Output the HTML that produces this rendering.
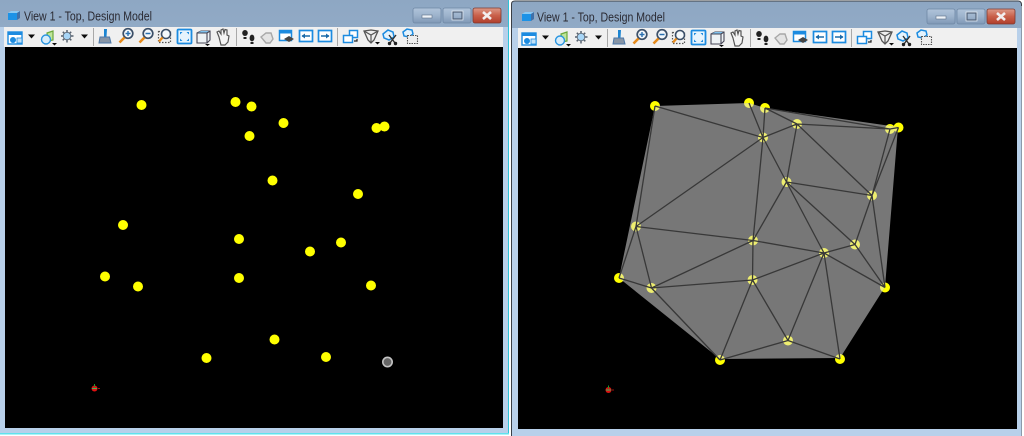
<!DOCTYPE html>
<html><head><meta charset="utf-8"><style>
html,body{margin:0;padding:0;background:#fff;width:1024px;height:436px;overflow:hidden}
svg{display:block}
text{font-family:"Liberation Sans",sans-serif;font-size:12.5px;fill:#2a2a33}
.d circle{r:5px}
</style></head><body>
<svg width="1024" height="436" viewBox="0 0 1024 436" xmlns="http://www.w3.org/2000/svg">
<defs>
<filter id="soft" x="-2%" y="-10%" width="104%" height="120%"><feGaussianBlur stdDeviation=".35"/></filter>
<linearGradient id="tg" x1="0" y1="0" x2="0" y2="1"><stop offset="0" stop-color="#8ea7c3"/><stop offset=".6" stop-color="#a9c2dc"/><stop offset="1" stop-color="#b9d1ea"/></linearGradient>
<linearGradient id="bb" x1="0" y1="0" x2="0" y2="1"><stop offset="0" stop-color="#b0c4da"/><stop offset=".5" stop-color="#9db3cc"/><stop offset="1" stop-color="#7f98b6"/></linearGradient>
<linearGradient id="cb" x1="0" y1="0" x2="0" y2="1"><stop offset="0" stop-color="#dd9a88"/><stop offset=".5" stop-color="#c9604a"/><stop offset="1" stop-color="#b03e2c"/></linearGradient>
<clipPath id="hull"><polygon points="655,106 749,103 765,108 898,127 885,287 840,358 720,359 619,278"/></clipPath>
<g id="chrome">
  <rect x="4" y="27" width="499" height="20" fill="#f0f0f0"/>
  <rect x="413" y="8" width="28" height="15" rx="2" fill="url(#bb)" stroke="#6f88a5" stroke-width=".8"/>
  <rect x="422" y="15" width="10" height="3" fill="#eef3f8" stroke="#5c6f86" stroke-width=".6"/>
  <rect x="443" y="8" width="28" height="15" rx="2" fill="url(#bb)" stroke="#6f88a5" stroke-width=".8"/>
  <rect x="453" y="12" width="9" height="7" fill="none" stroke="#4f6077" stroke-width="1.200"/><rect x="452" y="11" width="11" height="9" fill="none" stroke="#e8eef5" stroke-width=".7"/>
  <rect x="473" y="8" width="28" height="15" rx="2" fill="url(#cb)" stroke="#7e3a30" stroke-width=".8"/>
  <path d="M483 12 L491 19 M491 12 L483 19" stroke="#f3eeee" stroke-width="2.600"/>
  <path d="M8 13 h9 v7 h-9z" fill="#1d92e6"/><path d="M8 13 l3 -2 h9 l-3 2z" fill="#8cc9f2"/><path d="M17 13 l3 -2 v7 l-3 2z" fill="#3f6fa8"/>
  <g id="tools">
    <rect x="8" y="32" width="14" height="12" fill="#fff" stroke="#1a8be0" stroke-width="1.400"/><rect x="8" y="32" width="14" height="3" fill="#1a8be0"/><circle cx="13" cy="40" r="3" fill="#1a8be0"/><rect x="17" y="38" width="5" height="5" fill="#bfe0f7" stroke="#1a8be0" stroke-width=".8"/>
    <path d="M28 34.500 h7 l-3.500 4z" fill="#111"/>
    <path d="M47 33 l6 -2 v9 l-5 1z" fill="#bfe59a" stroke="#6ca83e" stroke-width="1.200"/><circle cx="46" cy="39.500" r="4.500" fill="#d7ecfa" stroke="#2b95e0" stroke-width="1.400"/><path d="M52 43 h5 l-2.500 2.500z" fill="#111"/>
    <circle cx="67" cy="36" r="3.800" fill="#a8d6f7" stroke="#6b7684"/><path d="M67 30 v2.500 M67 39.500 v3 M61 36 h2.500 M70.500 36 h3 M62.800 31.800 l1.800 1.800 M69.500 38.500 l1.800 1.800 M71.200 31.800 l-1.800 1.800 M64.500 38.500 l-1.800 1.800" stroke="#59636f" stroke-width="1.500"/>
    <path d="M81 34.500 h7 l-3.500 4z" fill="#111"/>
    <rect x="93" y="28" width="1" height="18" fill="#a9a9a9"/>
    <path d="M104 29 h3 l-.5 8 h-2.500z" fill="#1e85d2"/><path d="M100 37 h9.500 l1.500 6 h-12z" fill="#8795a6" stroke="#4d78a8" stroke-width="1"/>
    <circle cx="128" cy="33.500" r="4.800" fill="#f4f8fb" stroke="#3b4f67" stroke-width="1.700"/><path d="M125.500 33.500 h5 M128 31 v5" stroke="#2a6fb0" stroke-width="1.400"/><path d="M124.500 37.500 l-5 5" stroke="#e58a1c" stroke-width="2.600"/>
    <circle cx="148" cy="33.500" r="4.800" fill="#f4f8fb" stroke="#3b4f67" stroke-width="1.700"/><path d="M145.500 33.500 h5" stroke="#2a6fb0" stroke-width="1.500"/><path d="M144.500 37.500 l-5 5" stroke="#e58a1c" stroke-width="2.600"/>
    <rect x="158.500" y="31.500" width="12" height="11" fill="none" stroke="#555" stroke-width="1.200" stroke-dasharray="1.500 1.500"/><circle cx="166" cy="34" r="4.500" fill="#f4f8fb" stroke="#3b4f67" stroke-width="1.600"/><path d="M162.500 37.500 l-3.500 4" stroke="#e58a1c" stroke-width="2.400"/>
    <rect x="177.500" y="29.500" width="14" height="14" rx="1" fill="#e7f4fd" stroke="#1a8be0" stroke-width="1.800"/><path d="M180 32 h2.500 l-2.500 2.500z M189 32 h-2.500 l2.500 2.500z M180 41 h2.500 l-2.500 -2.500z M189 41 h-2.500 l2.500 -2.500z" fill="#1a8be0"/>
    <path d="M197 33 l4 -2 h9 v9 l-3 3 h-10z" fill="#eef2f5" stroke="#445" stroke-width="1.100"/><path d="M197 33 l4 -2 h9 l-3 2z" fill="#7fc2ef"/><path d="M197 33 h10 v10 M207 33 l3 -2" fill="none" stroke="#445" stroke-width="1.100"/><path d="M205 44 h5 l-2.500 2z" fill="#111"/>
    <path d="M219 37 l-2 -5 2 -1 2 3 0 -4 2 -1 1 4 1 -3.500 2 .5 0 5 2 1 -1 6 -3 3 h-4z" fill="#f4f4f4" stroke="#555" stroke-width="1.200"/>
    <rect x="236" y="28" width="1" height="18" fill="#a9a9a9"/>
    <ellipse cx="245" cy="33" rx="2.800" ry="3" fill="#222"/><path d="M243.500 37 h3 v2 h-3z" fill="#222"/><ellipse cx="252" cy="38" rx="2.400" ry="3.400" fill="#222"/><path d="M250.500 42 h3 v2 h-3z" fill="#222"/>
    <path d="M261 37 l5 -4 h5 l2 6 -3 4 h-4z" fill="#e4e4e4" stroke="#a8a8a8" stroke-width="1.400"/>
    <rect x="279.500" y="30.500" width="12" height="10" fill="#fff" stroke="#1a8be0" stroke-width="1.500"/><rect x="279.500" y="30.500" width="12" height="3" fill="#1a8be0"/><path d="M284 39 l5 -3 5 3 -5 3z" fill="#444"/>
    <rect x="299.500" y="30.500" width="13" height="11" fill="#fff" stroke="#1a8be0" stroke-width="1.700"/><path d="M302 36 h8" stroke="#1b6aa8" stroke-width="1.500"/><path d="M301.500 36 l3.500 -2.500 v5z" fill="#1b6aa8"/>
    <rect x="318.500" y="30.500" width="13" height="11" fill="#fff" stroke="#1a8be0" stroke-width="1.700"/><path d="M321 36 h8" stroke="#1b6aa8" stroke-width="1.500"/><path d="M329.500 36 l-3.500 -2.500 v5z" fill="#1b6aa8"/>
    <rect x="337" y="28" width="1" height="18" fill="#a9a9a9"/>
    <rect x="349.500" y="30.500" width="8" height="7" fill="#fff" stroke="#1a8be0" stroke-width="1.500"/><rect x="343.500" y="35.500" width="9" height="7" fill="#fff" stroke="#1a8be0" stroke-width="1.500"/><path d="M354 41 h3 v-2" fill="none" stroke="#222" stroke-width="1.200"/>
    <path d="M364 31 l7 -1 7 1 -4 9 -3 3 -3 -3z" fill="#eee" stroke="#555" stroke-width="1.300"/><path d="M364 31 l7 4 7 -4 M371 35 v8" fill="none" stroke="#555" stroke-width="1.200"/><path d="M375 42 h5 l-2.500 2.500z" fill="#111"/>
    <path d="M383 34 l5 -4 5 2 1 5 -5 3 -5 -2z" fill="#e4f3fd" stroke="#1a8be0" stroke-width="1.500"/><path d="M389 35 l6 8 M396 35 l-6 8" stroke="#333" stroke-width="1.400"/><circle cx="389.500" cy="43.500" r="1.700" fill="#222"/><circle cx="395.500" cy="43.500" r="1.700" fill="#222"/>
    <path d="M403 32 l4 -3 5 1 1 4 -4 3 -5 -1z" fill="#e4f3fd" stroke="#1a8be0" stroke-width="1.500"/><rect x="407.500" y="35.500" width="10" height="8" fill="#eee" stroke="#555" stroke-width="1.100" stroke-dasharray="1.500 1"/>
  </g>
</g>
</defs>

<!-- window 1 -->
<rect x="0" y="0" width="509" height="434" fill="url(#tg)"/>
<rect x="0" y="27" width="509" height="407" fill="#b8d0ea"/>
<rect x="508" y="0" width="1" height="434" fill="#2ec3d8"/>
<rect x="0" y="433" width="509" height="1.500" fill="#5fe3ee"/>
<rect x="5" y="47" width="498" height="381" fill="#000"/>
<g filter="url(#soft)"><use href="#chrome"/></g>
<text x="24" y="20.500" textLength="128" lengthAdjust="spacingAndGlyphs" filter="url(#soft)">View 1 - Top, Design Model</text>
<g class="d" fill="#ffff00">
<circle cx="141.500" cy="105" r="5"/><circle cx="235.500" cy="102" r="5"/><circle cx="251.500" cy="106.500" r="5"/><circle cx="283.500" cy="123" r="5"/><circle cx="249.500" cy="136" r="5"/><circle cx="376.500" cy="128" r="5"/><circle cx="384.500" cy="126.500" r="5"/><circle cx="272.500" cy="180.500" r="5"/><circle cx="358" cy="194" r="5"/><circle cx="123" cy="225" r="5"/><circle cx="239" cy="239" r="5"/><circle cx="341" cy="242.500" r="5"/><circle cx="310" cy="251.500" r="5"/><circle cx="105" cy="276.500" r="5"/><circle cx="138" cy="286.500" r="5"/><circle cx="239" cy="278" r="5"/><circle cx="371" cy="285.500" r="5"/><circle cx="274.500" cy="339.500" r="5"/><circle cx="206.500" cy="358" r="5"/><circle cx="326" cy="357" r="5"/>
</g>
<circle cx="387.500" cy="362" r="4.700" fill="#666" stroke="#c4c4c4" stroke-width="1.600"/>
<circle cx="94.500" cy="388.500" r="3" fill="#e01010"/><path d="M94.500 384 v3" stroke="#1a9a30"/><path d="M98 388.500 h2" stroke="#a01010"/><rect x="92" y="388" width="5" height="1" fill="#30c060"/>

<!-- window 2 -->
<rect x="510" y="0" width="1.500" height="436" fill="#fff"/>
<path d="M511.500 436 V4 Q511.500 1 515 1 H1018 Q1021 1 1021.500 4 V436" fill="url(#tg)" stroke="#3a3f46" stroke-width="1"/>
<rect x="512" y="28" width="509" height="408" fill="#b8d0ea"/>
<rect x="1021" y="6" width="1" height="430" fill="#8c9aaa"/>
<rect x="518" y="48" width="499" height="381" fill="#000"/>
<g filter="url(#soft)"><use href="#chrome" x="514" y="1"/></g>
<text x="537" y="21.500" textLength="128" lengthAdjust="spacingAndGlyphs" filter="url(#soft)">View 1 - Top, Design Model</text>
<g class="d" fill="#ffff00">
<circle cx="655" cy="106" r="5"/><circle cx="749" cy="103" r="5"/><circle cx="765" cy="108" r="5"/><circle cx="797" cy="124" r="5"/><circle cx="763" cy="137.500" r="5"/><circle cx="890" cy="129" r="5"/><circle cx="898.500" cy="127.500" r="5"/><circle cx="786.500" cy="182" r="5"/><circle cx="872" cy="195.500" r="5"/><circle cx="636" cy="226.500" r="5"/><circle cx="753" cy="240.500" r="5"/><circle cx="855" cy="244.500" r="5"/><circle cx="824" cy="253" r="5"/><circle cx="619" cy="278" r="5"/><circle cx="651.500" cy="288" r="5"/><circle cx="752.500" cy="280" r="5"/><circle cx="885" cy="287.500" r="5"/><circle cx="788" cy="340.500" r="5"/><circle cx="720" cy="360" r="5"/><circle cx="840" cy="359" r="5"/>
</g>
<polygon points="655,106 749,103 765,108 898,127 885,287 840,358 720,359 619,278" fill="#777777"/>
<g class="d" clip-path="url(#hull)" fill="#eeee70">
<circle cx="655" cy="106" r="5"/><circle cx="749" cy="103" r="5"/><circle cx="765" cy="108" r="5"/><circle cx="797" cy="124" r="5"/><circle cx="763" cy="137.500" r="5"/><circle cx="890" cy="129" r="5"/><circle cx="898.500" cy="127.500" r="5"/><circle cx="786.500" cy="182" r="5"/><circle cx="872" cy="195.500" r="5"/><circle cx="636" cy="226.500" r="5"/><circle cx="753" cy="240.500" r="5"/><circle cx="855" cy="244.500" r="5"/><circle cx="824" cy="253" r="5"/><circle cx="619" cy="278" r="5"/><circle cx="651.500" cy="288" r="5"/><circle cx="752.500" cy="280" r="5"/><circle cx="885" cy="287.500" r="5"/><circle cx="788" cy="340.500" r="5"/><circle cx="720" cy="360" r="5"/><circle cx="840" cy="359" r="5"/>
</g>
<path fill="none" stroke="#383838" stroke-width="1.300" d="M655 106L763 137.500M749 103L763 137.500M765 108L763 137.500M765 108L797 124M763 137.500L797 124M797 124L890 129M765 108L890 129M797 124L786.500 182M763 137.500L786.500 182M763 137.500L753 240.500M763 137.500L636 226.500M655 106L636 226.500M786.500 182L753 240.500M786.500 182L824 253M786.500 182L855 244.500M786.500 182L872 195.500M797 124L872 195.500M890 129L872 195.500M898.500 127.500L872 195.500M890 129L898.500 127.500M872 195.500L855 244.500M872 195.500L885 287.500M855 244.500L885 287.500M855 244.500L824 253M824 253L885 287.500M636 226.500L753 240.500M636 226.500L619 278M636 226.500L651.500 288M619 278L651.500 288M651.500 288L753 240.500M651.500 288L752.500 280M753 240.500L752.500 280M753 240.500L824 253M752.500 280L824 253M752.500 280L788 340.500M752.500 280L720 360M651.500 288L720 360M720 360L788 340.500M788 340.500L840 359M788 340.500L824 253M824 253L840 359"/>
<circle cx="608.500" cy="390" r="3" fill="#e01010"/><path d="M608.500 385.500 v3" stroke="#1a9a30"/><path d="M612 390 h2" stroke="#a01010"/><rect x="606" y="389.500" width="5" height="1" fill="#30c060"/>
</svg>
</body></html>
